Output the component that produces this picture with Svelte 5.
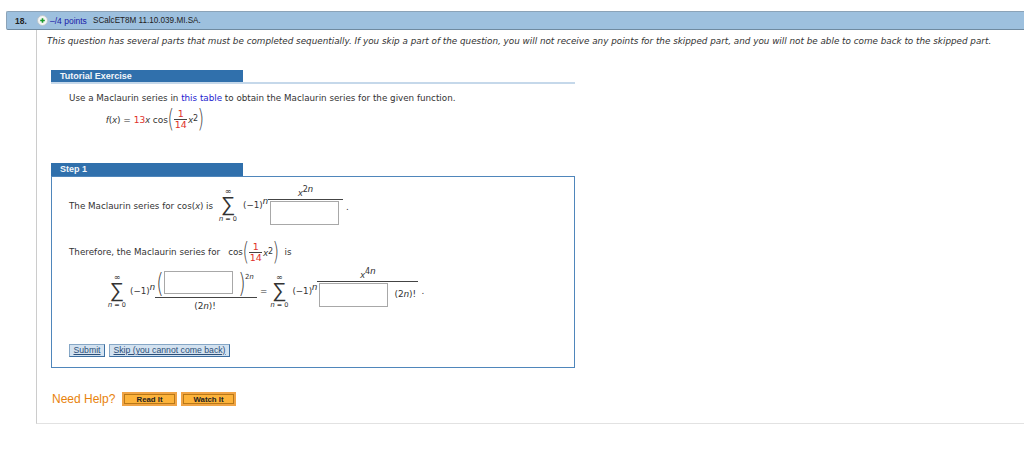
<script>
  const notice =
    "This question has several parts that must be completed sequentially. If you skip a part of the question, you will not receive any points for the skipped part, and you will not be able to come back to the skipped part.";
</script>

{#snippet sum()}
  <span class="sum">
    <span class="lim inf">∞</span>
    <span class="sigma">∑</span>
    <span class="lim below"><i>n</i> = 0</span>
  </span>
{/snippet}

{#snippet oneOver14()}
  <span class="paren">(</span>
  <span class="frac small">
    <span class="top red">1</span>
    <span class="red">14</span>
  </span>
  <i>x</i><sup>2</sup>
  <span class="paren">)</span>
{/snippet}

<main>
  <header class="bar">
    <b class="num">18.</b>
    <span class="plus">
      <svg width="11" height="11" viewBox="0 0 11 11">
        <circle cx="5.5" cy="5.5" r="5" fill="#f4f6f4" stroke="#b9c4cc" />
        <path d="M3.2 5.5h4.6M5.5 3.2v4.6" stroke="#1a9a2a" stroke-width="1.6" />
      </svg>
    </span>
    <span class="points">–/4 points</span>
    <span class="code">SCalcET8M 11.10.039.MI.SA.</span>
  </header>

  <div class="content">
    <p class="notice">{notice}</p>

    <section class="tutorial">
      <div class="tab-row"><h2>Tutorial Exercise</h2></div>
      <p class="intro">Use a Maclaurin series in <span class="link">this table</span> to obtain the Maclaurin series for the given function.</p>
      <div class="func">
        <span class="lead"><i>f</i>(<i>x</i>) = <span class="red">13</span><i>x</i> cos</span>
        {@render oneOver14()}
      </div>
    </section>

    <section class="step">
      <h2 class="step-tab">Step 1</h2>
      <div class="box">
        <div class="row first">
          <span>The Maclaurin series for cos(<i>x</i>) is</span>
          <span class="gap5"></span>
          {@render sum()}
          <span class="sign">(−1)<sup><i>n</i></sup></span>
          <span class="frac wide">
            <span class="top power"><i>x</i><sup>2<i>n</i></sup></span>
            <span class="answer"></span>
          </span>
          <span class="dot">.</span>
        </div>

        <div class="row second">
          <span>Therefore, the Maclaurin series for</span>
          <span class="cos">cos</span>
          {@render oneOver14()}
          <span class="is">is</span>
        </div>

        <div class="row third">
          {@render sum()}
          <span class="sign">(−1)<sup><i>n</i></sup></span>
          <span class="frac big">
            <span class="top inner">
              <span class="paren tall">(</span>
              <span class="answer"></span>
              <span class="paren tall">)</span>
              <sup class="exp">2<i>n</i></sup>
            </span>
            <span class="fact">(2<i>n</i>)!</span>
          </span>
          <span class="eq">=</span>
          {@render sum()}
          <span class="sign">(−1)<sup><i>n</i></sup></span>
          <span class="frac wider">
            <span class="top power"><i>x</i><sup>4<i>n</i></sup></span>
            <span class="under">
              <span class="answer"></span>
              <span class="fact">(2<i>n</i>)!</span>
            </span>
          </span>
          <span class="dot high">.</span>
        </div>

        <div class="actions">
          <button class="submit">Submit</button>
          <button class="skip">Skip (you cannot come back)</button>
        </div>
      </div>
    </section>

    <div class="help">
      <span class="need">Need Help?</span>
      <button class="orange">Read It</button>
      <button class="orange">Watch It</button>
    </div>
  </div>
</main>

<style>
  :global(body) {
    background: #fff;
  }
  main {
    height: 455px;
    padding-top: 11px;
    box-sizing: border-box;
    font-family: "DejaVu Sans", Verdana, sans-serif;
    font-size: 8.75px;
    color: #333;
  }
  p,
  h2 {
    margin: 0;
  }
  sup {
    font-size: 8px;
    line-height: 0;
    vertical-align: 4px;
  }
  .bar {
    display: flex;
    align-items: center;
    height: 19px;
    box-sizing: border-box;
    margin-left: 6px;
    padding-left: 8px;
    background: #9dc0de;
    border-top: 1px solid #8ba3b8;
    border-bottom: 1px solid #6f8aa0;
    border-left: 1px solid #8ba3b8;
    border-radius: 2px 0 0 2px;
    font-family: "Liberation Sans", Arial, sans-serif;
    font-size: 8.5px;
    color: #222;
  }
  .num {
    width: 22px;
  }
  .plus {
    display: flex;
    width: 13px;
  }
  .points {
    width: 43px;
    color: #1a1aa8;
  }
  .code {
    font-size: 8.15px;
  }
  .content {
    margin-left: 36px;
    height: 394px;
    box-sizing: border-box;
    border-left: 1px solid #ccc;
    border-bottom: 1px solid #e2e2e2;
    padding: 5px 0 0 14px;
  }
  .notice {
    margin-left: -4px;
    font-style: italic;
    font-size: 8.8px;
    line-height: 12px;
    white-space: nowrap;
  }
  .tutorial {
    margin-top: 23px;
  }
  .tab-row {
    width: 524px;
    border-bottom: 2px solid #c5d8ea;
  }
  h2 {
    width: 192px;
    height: 12px;
    box-sizing: border-box;
    padding-left: 9px;
    background: #3070ac;
    color: #f2f6fa;
    font-family: "Liberation Sans", Arial, sans-serif;
    font-size: 9px;
    line-height: 12px;
    font-weight: bold;
  }
  .intro {
    margin: 9px 0 0 18px;
    line-height: 11px;
    white-space: nowrap;
  }
  .link {
    color: #1c1cd0;
  }
  .func {
    display: flex;
    align-items: center;
    height: 24px;
    margin: 3px 0 0 55px;
    white-space: pre;
  }
  .func i,
  .row i {
    font-family: "Liberation Sans", Arial, sans-serif;
    font-size: 9.5px;
  }
  .lead {
    font-size: 9px;
  }
  .red {
    color: #e0302a;
  }
  .paren {
    font-size: 24px;
    font-weight: 200;
    line-height: 24px;
    transform: scaleX(0.7);
    margin: 0 -2px;
    color: #444;
  }
  .paren.tall {
    flex: none;
    font-size: 27px;
    line-height: 28px;
    margin: 0 1px 0 0;
    width: 8px;
    text-align: center;
  }
  .frac {
    display: inline-flex;
    flex-direction: column;
    align-items: center;
  }
  .top {
    align-self: stretch;
    text-align: center;
    border-bottom: 1px solid #444;
  }
  .small {
    font-size: 9.5px;
    line-height: 10px;
    width: 13px;
    margin: 0 1px;
  }
  .step {
    margin-top: 32px;
  }
  .step-tab {
    height: 13px;
    line-height: 13px;
  }
  .box {
    width: 524px;
    height: 192px;
    box-sizing: border-box;
    border: 1px solid #4f86bb;
    padding-left: 17px;
    background: #fff;
  }
  .row {
    display: flex;
    align-items: center;
    white-space: pre;
  }
  .first {
    height: 44px;
    margin-top: 6px;
  }
  .first .sign {
    margin-left: 2px;
  }
  .gap5 {
    width: 5px;
  }
  .sum {
    display: inline-flex;
    flex: none;
    flex-direction: column;
    align-items: center;
    width: 20px;
    font-size: 6.5px;
    line-height: 8px;
    margin-right: 3px;
  }
  .sum .lim i {
    font-size: 7.5px;
  }
  .inf {
    font-size: 8px;
  }
  .below {
    margin-top: 3px;
  }
  .sigma {
    font-size: 20px;
    line-height: 16px;
    font-weight: 200;
  }
  .wide {
    width: 75px;
  }
  .power {
    font-size: 9px;
    line-height: 13px;
    height: 13px;
  }
  .answer {
    display: block;
    flex: none;
    width: 69px;
    height: 24px;
    box-sizing: border-box;
    margin-top: 1px;
    background: #fff;
    border: 1px solid #a8a8a8;
  }
  .wide .answer {
    align-self: flex-start;
    margin-left: 2px;
  }
  .dot {
    margin: 4px 0 0 3px;
  }
  .second {
    height: 24px;
    margin-top: 13px;
  }
  .cos {
    margin-left: 8px;
  }
  .is {
    margin-left: 6px;
  }
  .third {
    height: 44px;
    margin-top: 5px;
    padding-left: 38px;
  }
  .big {
    width: 102px;
  }
  .big .fact {
    line-height: 15px;
    margin-left: -2px;
  }
  .inner {
    display: flex;
    align-items: center;
    justify-content: flex-start;
    height: 29px;
  }
  .inner .answer {
    margin: 0;
    height: 23px;
  }
  .inner .paren.tall:nth-of-type(3) {
    margin-left: 4px;
  }
  .exp {
    align-self: flex-start;
    margin: 5px 0 0 -1px;
    vertical-align: 0;
    line-height: 7px;
    font-size: 7px;
  }
  .exp i {
    font-size: 7.5px;
  }
  .fact {
    font-size: 9px;
    line-height: 13px;
  }
  .eq {
    margin: 0 2px 0 3px;
  }
  .wider {
    width: 101px;
    margin-bottom: 8px;
  }
  .under {
    display: flex;
    align-items: center;
    align-self: flex-start;
    gap: 6px;
    margin-left: 2px;
  }
  .dot.high {
    margin: 0 0 0 3px;
  }
  .actions {
    display: flex;
    gap: 4px;
    margin-top: 31px;
  }
  button {
    height: 13px;
    padding: 0;
    box-sizing: border-box;
    background: #d3e2f0;
    border: 1px solid #3d70a3;
    border-top-color: #86a7c6;
    border-left-color: #86a7c6;
    border-radius: 0;
    color: #2c4f78;
    font-family: "Liberation Sans", Arial, sans-serif;
    font-size: 8.7px;
    line-height: 11px;
    text-decoration: underline;
    white-space: nowrap;
  }
  .submit {
    width: 36px;
  }
  .skip {
    width: 121px;
  }
  .help {
    display: flex;
    align-items: center;
    gap: 4px;
    margin-top: 24px;
  }
  .need {
    width: 66px;
    margin-left: 1px;
    font-family: "Liberation Sans", Arial, sans-serif;
    font-size: 12px;
    color: #e8820c;
  }
  .orange {
    width: 55px;
    height: 14px;
    background: #fdb33a;
    border: 2px solid #f0a445;
    box-shadow: inset 0 0 0 1px #b87818;
    color: #222;
    font-size: 7.8px;
    line-height: 9px;
    font-weight: bold;
    text-decoration: none;
  }
</style>
